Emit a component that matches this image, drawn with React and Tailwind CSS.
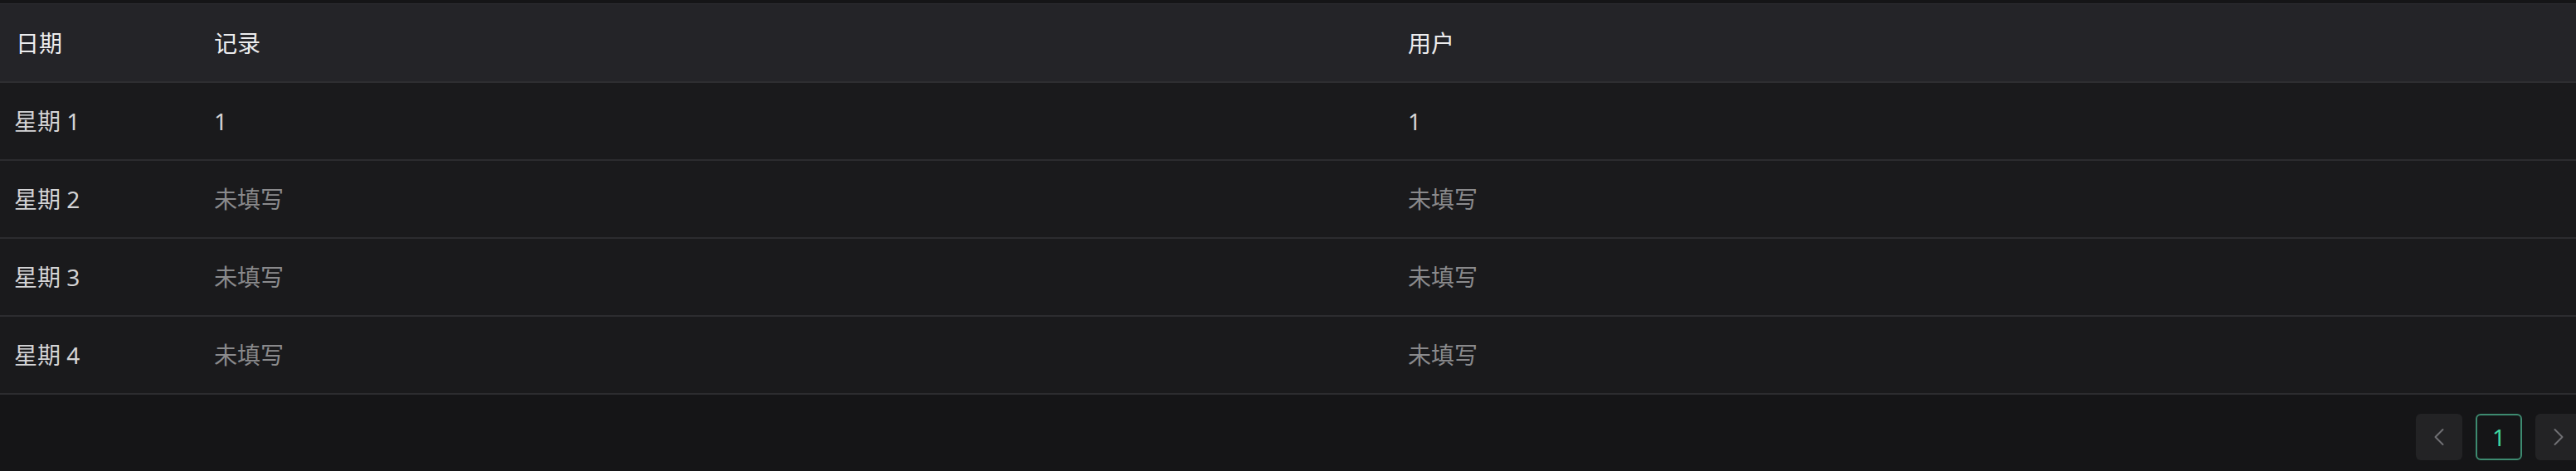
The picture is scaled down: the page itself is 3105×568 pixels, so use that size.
import React from "react";
import { ChevronLeft, ChevronRight } from "lucide-react";

const rows = [
  { day: "星期 1", record: "1", user: "1" },
  { day: "星期 2", record: null, user: null },
  { day: "星期 3", record: null, user: null },
  { day: "星期 4", record: null, user: null },
];

const Cell = ({ value }) =>
  value === null ? (
    <span className="text-[#8a8a8c]">未填写</span>
  ) : (
    <span className="text-[#d4d4d6]">{value}</span>
  );

export default function App() {
  return (
    <div
      className="w-full h-[568px] overflow-hidden bg-[#151517] pt-[4px]"
      style={{ fontFamily: '"Noto Sans", "Noto Sans CJK SC", sans-serif' }}
    >
      <div className="w-[3112px]">
        {/* table */}
        <div className="border-t border-[#2d2d31] text-[28px] leading-none">
          <div className="grid grid-cols-[239px_1439px_1fr] h-[95px] items-center bg-[#242428] border-b-2 border-[#2e2e31] text-[#ececee]">
            <div className="pl-[19px]">日期</div>
            <div className="pl-[19px]">记录</div>
            <div className="pl-[19px]">用户</div>
          </div>
          {rows.map((r) => (
            <div
              key={r.day}
              className="grid grid-cols-[239px_1439px_1fr] h-[94px] items-center bg-[#1a1a1c] border-b-2 border-[#2c2c2f]"
            >
              <div className="pl-[17px] text-[#d4d4d6]">{r.day}</div>
              <div className="pl-[19px]">
                <Cell value={r.record} />
              </div>
              <div className="pl-[19px]">
                <Cell value={r.user} />
              </div>
            </div>
          ))}
        </div>

        {/* pagination */}
        <div className="flex justify-end gap-4 mt-[23px]">
          <button className="w-[56px] h-[56px] rounded-[6px] bg-[#232325] flex items-center justify-center text-[#707074]">
            <ChevronLeft size={36} strokeWidth={1.3} />
          </button>
          <button className="w-[56px] h-[56px] rounded-[6px] border-2 border-[#3d8a70] flex items-center justify-center text-[28px] text-[#3fd9a0]">
            1
          </button>
          <button className="w-[56px] h-[56px] rounded-[6px] bg-[#232325] flex items-center justify-center text-[#707074]">
            <ChevronRight size={36} strokeWidth={1.3} />
          </button>
        </div>
      </div>
    </div>
  );
}
